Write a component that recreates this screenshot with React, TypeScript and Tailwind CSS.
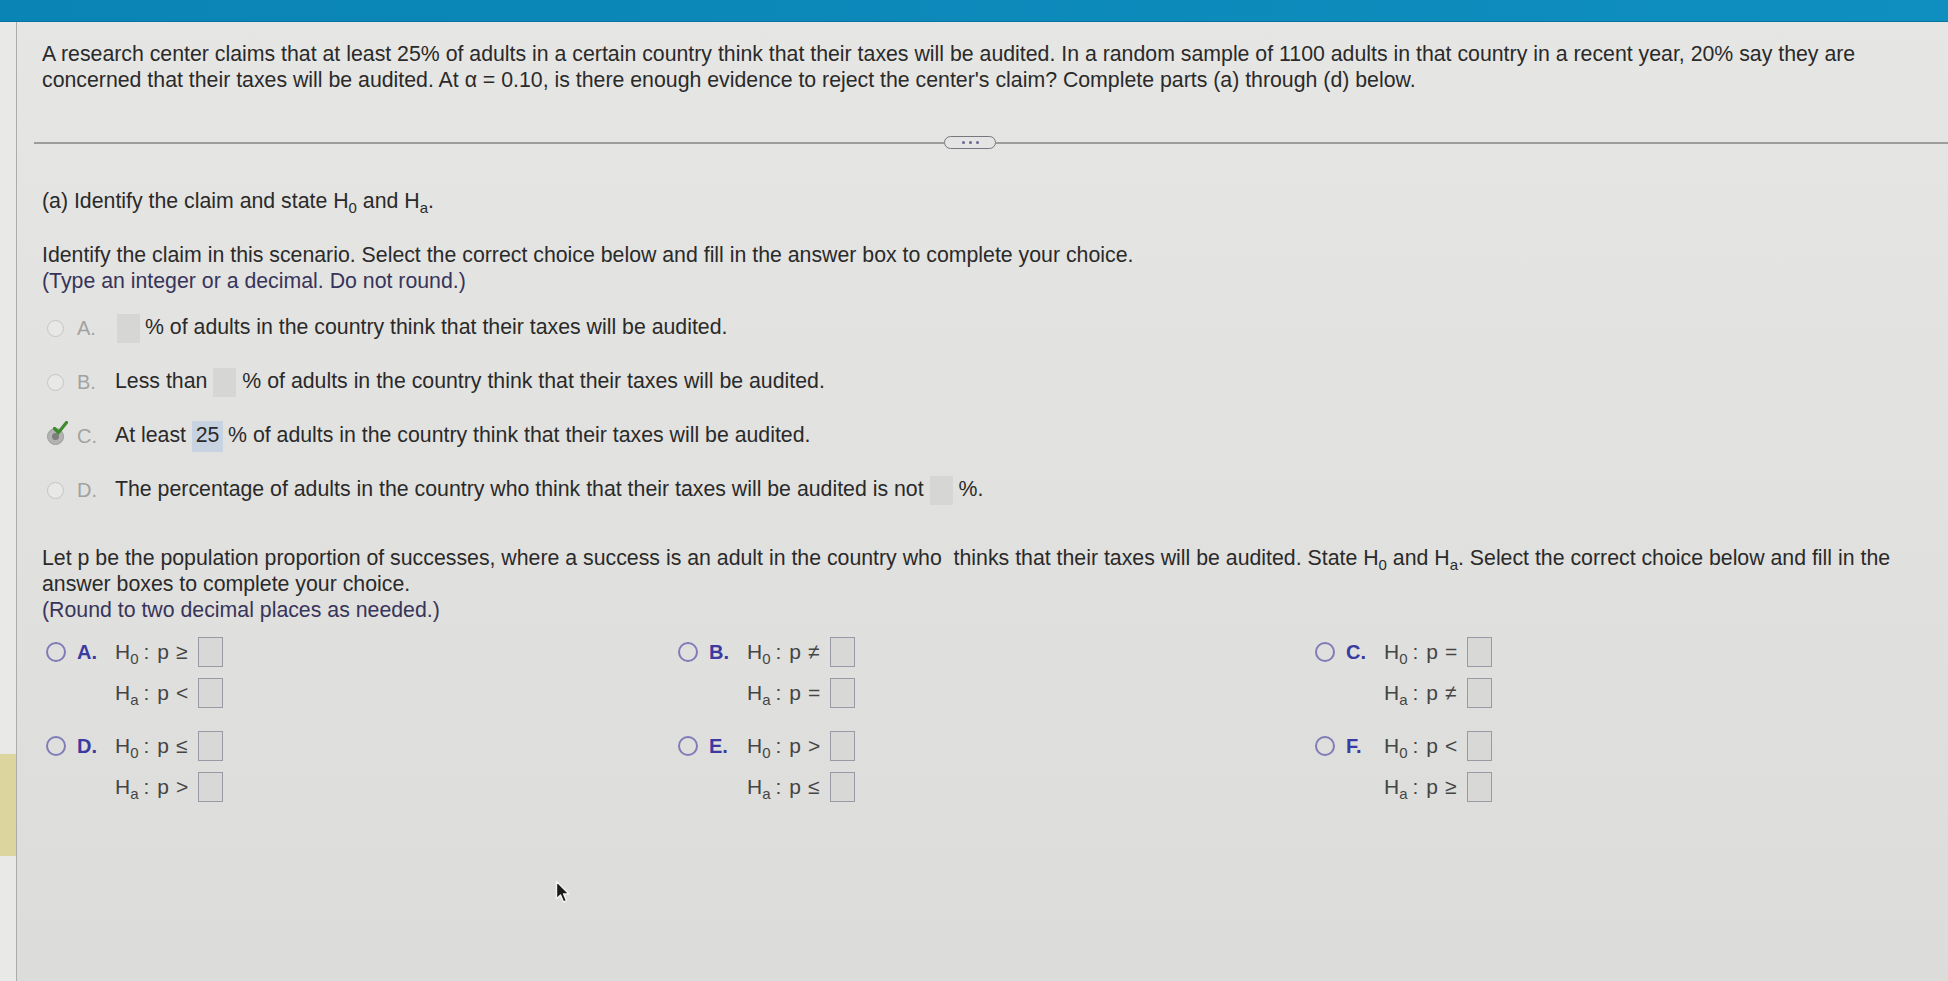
import React from "react";

const Sub = ({ c }: { c: string }) => (
  <sub className="text-[15px] bottom-[-0.32em]">{c}</sub>
);

function RadioA({ selected }: { selected?: boolean }) {
  if (selected) {
    return (
      <span className="relative ml-[5px] h-[17px] w-[17px] shrink-0">
        <span className="absolute inset-0 rounded-full border border-[#9c9c9a] bg-[#b3b3b1]" />
        <span className="absolute left-[5px] top-[5px] h-[7px] w-[7px] rounded-full bg-[#7e7e7c]" />
        <svg
          className="absolute left-[6px] top-[-7px]"
          width="15"
          height="15"
          viewBox="0 0 15 15"
        >
          <path
            d="M1.5 7.5 L5.5 11.5 L13.5 1.5"
            stroke="#3e8a2c"
            strokeWidth="3.2"
            strokeLinecap="round"
            strokeLinejoin="round"
            fill="none"
          />
        </svg>
      </span>
    );
  }
  return (
    <span className="ml-[5px] h-[17px] w-[17px] shrink-0 rounded-full border-[1.5px] border-[#c4c4c2] bg-[#e8e8e6]" />
  );
}

const GrayBox = ({ cls = "" }: { cls?: string }) => (
  <span className={`inline-block h-[29px] w-[23px] shrink-0 bg-[#d6d6d4] ${cls}`} />
);

function OptA({
  letter,
  selected,
  children,
}: {
  letter: string;
  selected?: boolean;
  children: React.ReactNode;
}) {
  return (
    <div className="flex h-[30px] items-center">
      <RadioA selected={selected} />
      <span className="ml-[13px] w-[38px] shrink-0 text-[20px] text-[#a2a2a0]">
        {letter}
      </span>
      {children}
    </div>
  );
}

const AnsBox = () => (
  <span className="h-[30px] w-[25px] shrink-0 border-[1.5px] border-[#9a9aa6] bg-[#d8d8d6]" />
);

function Hyp({ s, sym }: { s: string; sym: string }) {
  return (
    <div className="flex h-[32px] items-center text-[21px] text-[#454545]">
      <span className="w-[83px] shrink-0 whitespace-nowrap">
        H<Sub c={s} />
        <span className="ml-[5px]">:</span>
        <span className="ml-[8px]">p</span>
        <span className="ml-[7px]">{sym}</span>
      </span>
      <AnsBox />
    </div>
  );
}

function OptB({ letter, h0, ha }: { letter: string; h0: string; ha: string }) {
  return (
    <div className="flex items-start">
      <div className="flex h-[32px] items-center">
        <span className="ml-[4px] h-[20px] w-[20px] shrink-0 rounded-full border-[2px] border-[#7f7cb8]" />
        <span className="ml-[11px] w-[38px] shrink-0 text-[20px] font-bold text-[#3b39a2]">
          {letter}
        </span>
      </div>
      <div className="flex flex-col gap-[9px]">
        <Hyp s="0" sym={h0} />
        <Hyp s="a" sym={ha} />
      </div>
    </div>
  );
}

export default function App() {
  return (
    <div className="relative flex h-[981px] w-[1948px] flex-col overflow-hidden bg-linear-to-b from-[#e6e6e4] to-[#dcdcda] font-['Liberation_Sans',Arial,sans-serif] text-[21.3px] text-[#2a2a2a]">
      <div className="h-[22px] shrink-0 border-b border-[#0a74a0] bg-linear-to-r from-[#0a84b4] to-[#0e8fbf]" />
      <div className="flex flex-1">
        <div className="flex w-[17px] shrink-0 flex-col border-r border-[#acacaa] bg-[#e9e9e7]">
          <div className="h-[732px]" />
          <div className="h-[102px] bg-[#dcd59d]" />
        </div>
        <main className="flex-1 pl-[25px] pt-[19px]">
          <p className="leading-[26px] whitespace-nowrap">
            A research center claims that at least 25% of adults in a certain
            country think that their taxes will be audited. In a random sample
            of 1100 adults in that country in a recent year, 20% say they are
            <br />
            concerned that their taxes will be audited. At α = 0.10, is there
            enough evidence to reject the center's claim? Complete parts (a)
            through (d) below.
          </p>

          <div className="-ml-[8px] mt-[43px] flex h-[13px] items-center">
            <div className="h-[2px] w-[910px] bg-[#9d9d9d]" />
            <div className="flex h-[13px] w-[52px] items-center justify-center gap-[4px] rounded-full border-[1.5px] border-[#77777d] bg-[#e4e4e4]">
              <span className="h-[3px] w-[3px] rounded-full bg-[#6b6793]" />
              <span className="h-[3px] w-[3px] rounded-full bg-[#6b6793]" />
              <span className="h-[3px] w-[3px] rounded-full bg-[#6b6793]" />
            </div>
            <div className="h-[2px] flex-1 bg-[#9d9d9d]" />
          </div>

          <p className="mt-[39px] leading-[26px]">
            (a) Identify the claim and state H<Sub c="0" /> and H<Sub c="a" />.
          </p>

          <p className="mt-[28px] leading-[26px]">
            Identify the claim in this scenario. Select the correct choice below
            and fill in the answer box to complete your choice.
          </p>
          <p className="leading-[26px] text-[#37345a]">
            (Type an integer or a decimal. Do not round.)
          </p>

          <div className="mt-[19px] flex flex-col gap-[24px]">
            <OptA letter="A.">
              <GrayBox cls="ml-[2px]" />
              <span className="ml-[5px]">
                % of adults in the country think that their taxes will be
                audited.
              </span>
            </OptA>
            <OptA letter="B.">
              <span>Less than</span>
              <GrayBox cls="mx-[6px]" />
              <span>
                % of adults in the country think that their taxes will be
                audited.
              </span>
            </OptA>
            <OptA letter="C." selected>
              <span>At least</span>
              <span className="ml-[6px] mr-[5px] flex h-[31px] w-[31px] shrink-0 items-center justify-center bg-[#c8d3e1]">
                25
              </span>
              <span>
                % of adults in the country think that their taxes will be
                audited.
              </span>
            </OptA>
            <OptA letter="D.">
              <span>
                The percentage of adults in the country who think that their
                taxes will be audited is not
              </span>
              <GrayBox cls="mx-[6px]" />
              <span>%.</span>
            </OptA>
          </div>

          <p className="mt-[40px] whitespace-nowrap leading-[26px]">
            Let p be the population proportion of successes, where a success is
            an adult in the country who&nbsp; thinks that their taxes will be
            audited. State H<Sub c="0" /> and H<Sub c="a" />. Select the correct
            choice below and fill in the
            <br />
            answer boxes to complete your choice.
          </p>
          <p className="leading-[26px] text-[#37345a]">
            (Round to two decimal places as needed.)
          </p>

          <div className="mt-[13px] grid grid-cols-[632px_637px_1fr] gap-y-[21px]">
            <OptB letter="A." h0="≥" ha="<" />
            <OptB letter="B." h0="≠" ha="=" />
            <OptB letter="C." h0="=" ha="≠" />
            <OptB letter="D." h0="≤" ha=">" />
            <OptB letter="E." h0=">" ha="≤" />
            <OptB letter="F." h0="<" ha="≥" />
          </div>
        </main>
      </div>

      <svg
        className="absolute left-[555px] top-[880px]"
        width="16"
        height="24"
        viewBox="0 0 16 24"
      >
        <path
          d="M1.5 1.5 L1.5 19 L5.5 15 L8.5 22 L11.5 20.7 L8.6 14 L14 14 Z"
          fill="#1a1a1a"
          stroke="#f4f4f4"
          strokeWidth="1.4"
          strokeLinejoin="round"
        />
      </svg>
    </div>
  );
}
